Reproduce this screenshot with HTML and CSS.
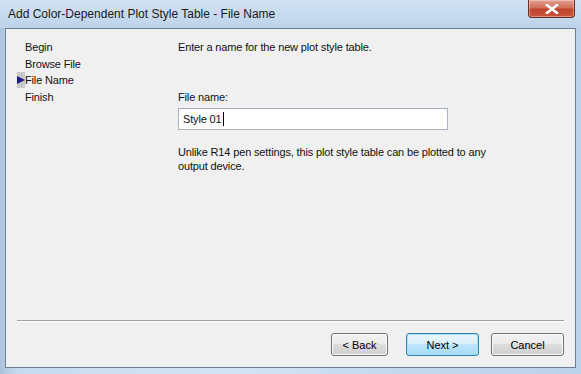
FILE: index.html
```html
<!DOCTYPE html>
<html lang="en">
<head>
    <meta charset="UTF-8">
    <title>Add Color-Dependent Plot Style Table - File Name</title>
    <link rel="stylesheet" href="styles.css">
</head>
<body>
    <div class="window">
        <div class="titlebar">
            <span class="title">Add Color-Dependent Plot Style Table - File Name</span>
            <span class="close">
                <svg width="14" height="10" viewBox="0 0 14 10">
                    <path d="M2 1 L12 9 M12 1 L2 9" stroke="#fff" stroke-width="2.6" stroke-linecap="square"/>
                </svg>
            </span>
        </div>

        <div class="client">
            <div class="main">
                <ul class="steps">
                    <li>Begin</li>
                    <li>Browse File</li>
                    <li class="current">
                        <span class="marker">
                            <svg width="8" height="16" viewBox="0 0 8 16">
                                <path d="M0 4 L8 8 L0 12 Z" fill="#1c1c8c"/>
                            </svg>
                        </span>File Name
                    </li>
                    <li>Finish</li>
                </ul>

                <div class="content">
                    <p class="intro">Enter a name for the new plot style table.</p>
                    <label class="field-label" for="filename">File name:</label>
                    <div class="field">
                        <span class="value">Style 01</span><span class="caret"></span>
                    </div>
                    <p class="note">Unlike R14 pen settings, this plot style table can be plotted to any<br>output device.</p>
                </div>
            </div>

            <div class="footer">
                <div class="separator"></div>
                <div class="buttons">
                    <button class="btn btn-back">&lt; Back</button>
                    <button class="btn btn-next">Next &gt;</button>
                    <button class="btn btn-cancel">Cancel</button>
                </div>
            </div>
        </div>
    </div>
</body>
</html>
```

FILE: styles.css
```css
body {
    margin: 0;
    width: 581px;
    height: 374px;
    overflow: hidden;
    font-family: "Liberation Sans", Arial, sans-serif;
}
.window {
    width: 581px;
    height: 374px;
    display: flex;
    flex-direction: column;
    background: linear-gradient(90deg, #a9c3de 0%, #c8dbee 3%, #d3e3f3 40%, #c4d8ed 70%, #bcd2ea 100%);
}
.titlebar {
    height: 28px;
    display: flex;
    align-items: flex-start;
    justify-content: space-between;
    background: linear-gradient(180deg, #d2e2f2 0%, #c5d9ee 60%, #bdd3ea 100%);
}
.title {
    margin: 7px 0 0 8px;
    font-size: 12px;
    color: #1a1a1a;
}
.close {
    width: 45px;
    height: 17px;
    margin-right: 6px;
    display: flex;
    align-items: center;
    justify-content: center;
    border: 1px solid #6b2a24;
    border-top: none;
    border-radius: 0 0 4px 4px;
    background: linear-gradient(180deg, #e2a08e 0%, #d0705a 45%, #c0442c 55%, #c9553b 100%);
    box-shadow: inset 0 0 0 1px rgba(255, 255, 255, 0.35);
}
.client {
    flex: 1;
    margin: 0 5px 6px 5px;
    background: #f0f0f0;
    border: 1px solid #6e7d8f;
    display: flex;
    flex-direction: column;
    font-size: 11px;
    letter-spacing: -0.15px;
    color: #111;
}
.main {
    flex: 1;
    display: flex;
}
.steps {
    list-style: none;
    margin: 0;
    padding: 10px 0 0 11px;
    width: 161px;
}
.steps li {
    height: 16.5px;
    line-height: 16px;
    padding-left: 8px;
    display: flex;
    align-items: center;
}
.steps li.current {
    padding-left: 0;
}
.marker {
    width: 8px;
    height: 16px;
    background: #c8c8c8;
    display: flex;
}
.content {
    padding-top: 10px;
    width: 380px;
}
.intro {
    margin: 0;
    line-height: 16px;
}
.field-label {
    display: block;
    margin-top: 34px;
    line-height: 16px;
}
.field {
    margin-top: 3px;
    height: 20px;
    border: 1px solid #abb6c2;
    border-top-color: #a3aebb;
    background: #fff;
    display: flex;
    align-items: center;
    padding-left: 4px;
    box-sizing: content-box;
    width: 264px;
}
.caret {
    width: 1px;
    height: 14px;
    background: #000;
    margin-left: 1px;
}
.note {
    margin: 15px 0 0 0;
    line-height: 14px;
}
.footer {
    height: 47px;
    padding: 0 11px 0 11px;
}
.separator {
    height: 1px;
    background: #a0a0a0;
    border-bottom: 1px solid #ffffff;
}
.buttons {
    display: flex;
    justify-content: flex-end;
    margin-top: 11px;
}
.btn {
    height: 23px;
    font-family: "Liberation Sans", Arial, sans-serif;
    font-size: 11px;
    color: #000;
    border: 1px solid #707070;
    border-radius: 3px;
    background: linear-gradient(180deg, #f2f2f2 0%, #ebebeb 45%, #dddddd 50%, #cfcfcf 100%);
    box-shadow: inset 0 0 0 1px #fbfbfb;
    padding: 0;
}
.btn-back {
    width: 57px;
}
.btn-next {
    width: 73px;
    margin-left: 18px;
    border-color: #3c7fb1;
    background: linear-gradient(180deg, #eaf6fd 0%, #d9f0fc 45%, #bee6fd 50%, #a7d9f5 100%);
    box-shadow: inset 0 0 0 1px #9ee4fa;
}
.btn-cancel {
    width: 73px;
    margin-left: 12px;
}
```
